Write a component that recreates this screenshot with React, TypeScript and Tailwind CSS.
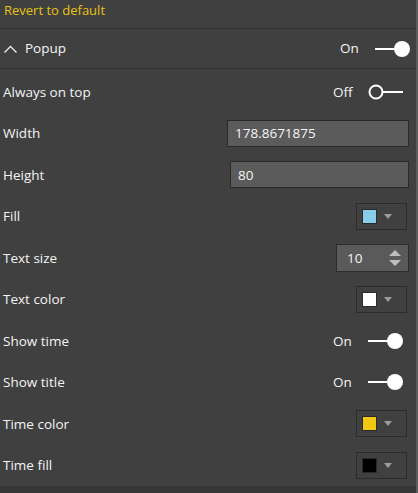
import React from 'react';

type Row =
  | { kind: 'toggle'; label: string; on: boolean }
  | { kind: 'input'; label: string; value: string; wide: boolean }
  | { kind: 'color'; label: string; color: string }
  | { kind: 'spin'; label: string; value: string };

const ROWS: Row[] = [
  { kind: 'toggle', label: 'Always on top', on: false },
  { kind: 'input', label: 'Width', value: '178.8671875', wide: true },
  { kind: 'input', label: 'Height', value: '80', wide: false },
  { kind: 'color', label: 'Fill', color: '#87ceeb' },
  { kind: 'spin', label: 'Text size', value: '10' },
  { kind: 'color', label: 'Text color', color: '#ffffff' },
  { kind: 'toggle', label: 'Show time', on: true },
  { kind: 'toggle', label: 'Show title', on: true },
  { kind: 'color', label: 'Time color', color: '#f2c811' },
  { kind: 'color', label: 'Time fill', color: '#000000' },
];

const Toggle: React.FC<{ on: boolean }> = ({ on }) => (
  <div className="flex items-center">
    <span className="w-[35px] text-[13.5px] text-[#f4f4f4]">{on ? 'On' : 'Off'}</span>
    {on ? (
      <svg width="35" height="18" viewBox="0 0 35 18">
        <line x1="0" y1="9" x2="20" y2="9" stroke="#fff" strokeWidth="2" />
        <circle cx="27" cy="9" r="8" fill="#fff" />
      </svg>
    ) : (
      <svg width="35" height="18" viewBox="0 0 35 18">
        <circle cx="8" cy="9" r="6.5" fill="none" stroke="#fff" strokeWidth="2" />
        <line x1="14.5" y1="9" x2="35" y2="9" stroke="#fff" strokeWidth="2" />
      </svg>
    )}
  </div>
);

const Caret = () => (
  <svg width="8" height="5" viewBox="0 0 8 5">
    <path d="M0 0 L8 0 L4 5 Z" fill="#9c9c9c" />
  </svg>
);

const ColorPicker: React.FC<{ color: string }> = ({ color }) => (
  <div className="mr-[9px] flex h-[27px] w-[51px] items-center border border-[#2b2b2b] pl-[5px]">
    <div className="h-[15px] w-[15px] border border-[#2a2a2a]" style={{ backgroundColor: color }} />
    <div className="ml-[7px]">
      <Caret />
    </div>
  </div>
);

const Spinner: React.FC<{ value: string }> = ({ value }) => (
  <div className="mr-[7px] flex h-[28px] w-[73px] items-center justify-between border border-[#2c2c2c] bg-[#5a5a5a] pl-[10px] pr-[7px] text-[13.5px] text-[#f4f4f4]">
    <span>{value}</span>
    <svg width="12" height="18" viewBox="0 0 12 18">
      <path d="M0 7 L6 1 L12 7 Z" fill="#bdbdbd" />
      <path d="M0 11 L12 11 L6 17 Z" fill="#bdbdbd" />
    </svg>
  </div>
);

const App: React.FC = () => {
  return (
    <div
      className="flex h-[493px] w-[418px] bg-[#404040] text-[#f4f4f4]"
      style={{ fontFamily: '"Open Sans", "Noto Sans", sans-serif' }}
    >
      <div className="flex w-[416px] flex-col">
        {/* Revert link */}
        <div className="h-[28px] pl-[4px] pt-[1px] text-[13px] leading-[18px] text-[#e6c313]">Revert to default</div>

        {/* Section header */}
        <div className="flex h-[41px] items-center justify-between border-y border-[#333333] pl-[4px] pr-[6px]">
          <div className="flex items-center gap-[8px]">
            <svg width="13" height="8" viewBox="0 0 13 8">
              <polyline points="0.5,7.5 6.5,1.5 12.5,7.5" fill="none" stroke="#e8e8e8" strokeWidth="1.4" />
            </svg>
            <span className="text-[13.5px]">Popup</span>
          </div>
          <Toggle on />
        </div>

        {/* Property rows */}
        <div className="flex flex-col pt-[2px]">
          {ROWS.map(row => (
            <div key={row.label} className="flex h-[41.5px] items-center justify-between pl-[3px]">
              <span className="text-[13.5px]">{row.label}</span>
              {row.kind === 'toggle' && (
                <div className="mr-[13px]">
                  <Toggle on={row.on} />
                </div>
              )}
              {row.kind === 'input' && (
                <div
                  className={`mr-[7px] flex h-[27px] items-center border border-[#2a2a2a] bg-[#5b5b5b] px-[7px] text-[13.5px] ${
                    row.wide ? 'w-[182px]' : 'w-[179px]'
                  }`}
                >
                  {row.value}
                </div>
              )}
              {row.kind === 'color' && <ColorPicker color={row.color} />}
              {row.kind === 'spin' && <Spinner value={row.value} />}
            </div>
          ))}
        </div>
        <div className="flex-1 bg-[#363636]" />
      </div>
      <div className="w-[2px] bg-[#5c5c5c]" />
    </div>
  );
};

export default App;
